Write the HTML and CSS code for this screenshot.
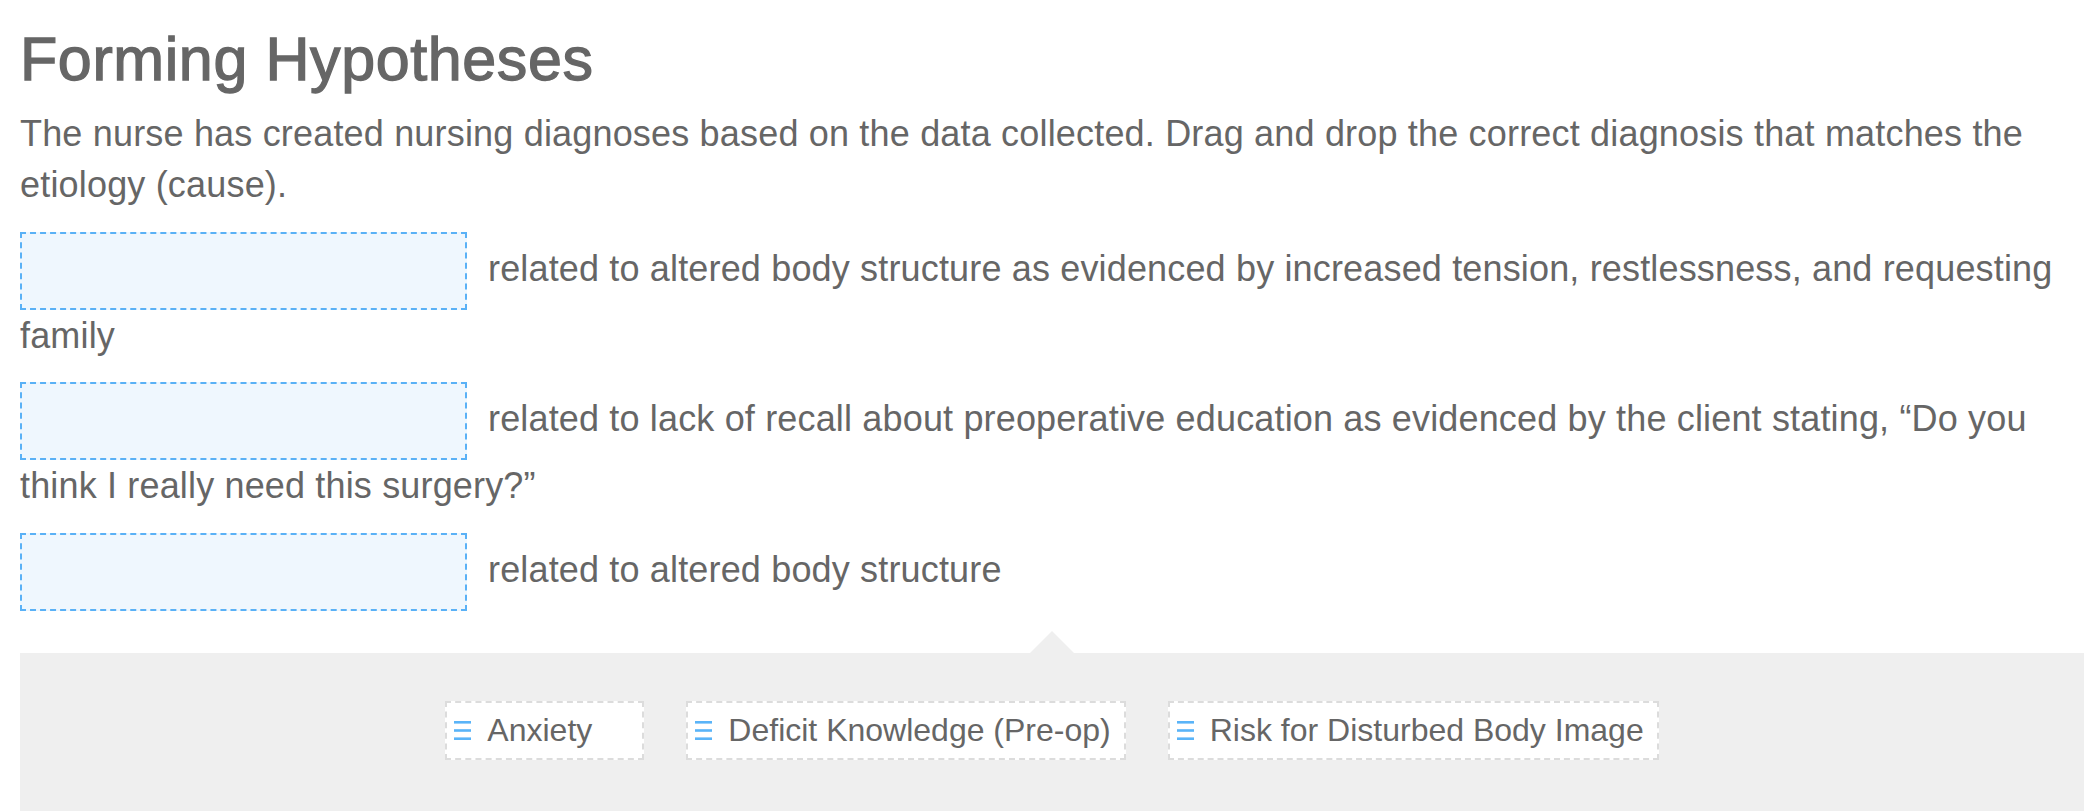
FILE: index.html
```html
<!DOCTYPE html>
<html lang="en">
<head>
<meta charset="utf-8">
<title>Forming Hypotheses</title>
<link rel="stylesheet" href="styles.css">
</head>
<body>
<main class="page">
  <h1 class="title">Forming Hypotheses</h1>
  <p class="intro">The nurse has created nursing diagnoses based on the data collected. Drag and drop the correct diagnosis that matches the etiology (cause).</p>

  <div class="row"><span class="drop"></span>related to altered body structure as evidenced by increased tension, restlessness, and requesting family</div>
  <div class="row"><span class="drop"></span>related to lack of recall about preoperative education as evidenced by the client stating, “Do you think I really need this surgery?”</div>
  <div class="row"><span class="drop"></span>related to altered body structure</div>

  <section class="bank">
    <div class="item item-min">
      <svg class="grip" viewBox="0 0 17 19" width="17" height="19" aria-hidden="true"><rect x="0" y="0" width="17" height="2.6"/><rect x="0" y="8.2" width="17" height="2.6"/><rect x="0" y="16.4" width="17" height="2.6"/></svg>
      <span>Anxiety</span>
    </div>
    <div class="item">
      <svg class="grip" viewBox="0 0 17 19" width="17" height="19" aria-hidden="true"><rect x="0" y="0" width="17" height="2.6"/><rect x="0" y="8.2" width="17" height="2.6"/><rect x="0" y="16.4" width="17" height="2.6"/></svg>
      <span>Deficit Knowledge (Pre-op)</span>
    </div>
    <div class="item">
      <svg class="grip" viewBox="0 0 17 19" width="17" height="19" aria-hidden="true"><rect x="0" y="0" width="17" height="2.6"/><rect x="0" y="8.2" width="17" height="2.6"/><rect x="0" y="16.4" width="17" height="2.6"/></svg>
      <span>Risk for Disturbed Body Image</span>
    </div>
  </section>
</main>
</body>
</html>
```

FILE: styles.css
```css
html, body {
  margin: 0;
  padding: 0;
  background: #ffffff;
}

body {
  font-family: "Liberation Sans", Arial, Helvetica, sans-serif;
  color: #666666;
  overflow: hidden;
}

.page {
  margin: 0 8px 0 20px;
}

.title {
  margin: 26px 0 16px;
  font-size: 61px;
  line-height: 66px;
  font-weight: 400;
  letter-spacing: 0.6px;
  color: #666666;
  -webkit-text-stroke: 1.3px #666666;
}

.intro {
  margin: 0 0 21px;
  font-size: 36px;
  line-height: 51.4px;
  letter-spacing: 0.18px;
}

.row {
  margin: 0 0 21px;
  font-size: 36px;
  line-height: 51.4px;
  letter-spacing: 0.16px;
}

.drop {
  display: inline-block;
  box-sizing: border-box;
  width: 447px;
  height: 78px;
  margin-right: 21px;
  vertical-align: middle;
  border: 2px dashed #5ab1f6;
  background: #eff7fe;
}

.bank {
  position: relative;
  box-sizing: border-box;
  margin-top: 42px;
  min-height: 158px;
  padding-top: 48px;
  background: #efefef;
  display: flex;
  justify-content: center;
  align-items: flex-start;
  gap: 42px;
}

.bank::before {
  content: "";
  position: absolute;
  left: 50%;
  top: -22px;
  margin-left: -22px;
  border-left: 22px solid transparent;
  border-right: 22px solid transparent;
  border-bottom: 22px solid #efefef;
}

.item {
  display: flex;
  align-items: center;
  box-sizing: border-box;
  padding: 5px 13px 5px 7px;
  border: 2px dashed #dcdcdc;
  background: #ffffff;
  font-size: 32px;
  line-height: 45px;
  color: #666666;
}

.item-min {
  min-width: 199px;
}

.grip {
  flex: none;
  margin-right: 16px;
  fill: #5ab4f8;
}
```
